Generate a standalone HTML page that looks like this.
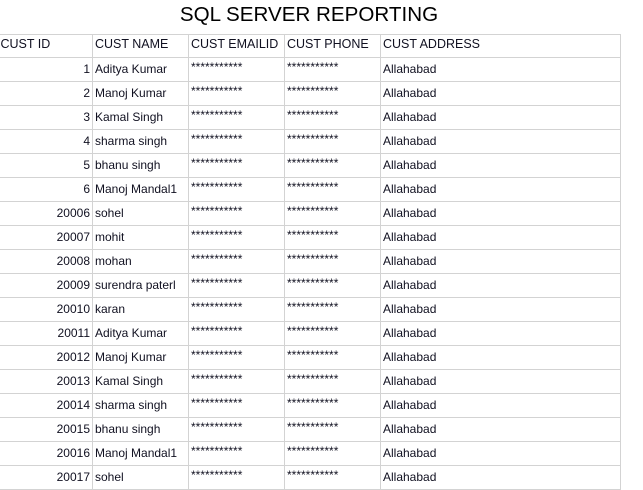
<!DOCTYPE html><html><head><style>
body{margin:0;width:643px;height:490px;overflow:hidden;background:#fff;font-family:"Liberation Sans",Arial,sans-serif;color:#000}
.t{position:absolute;left:0;width:618px;top:3px;text-align:center;font-size:20.6px}
table{position:absolute;left:-2px;top:34px;border-collapse:collapse;table-layout:fixed}
td{border:1px solid #d3d3d3;height:24px;padding:0 2px;font-size:12px;vertical-align:top;padding-top:4px;box-sizing:border-box;white-space:nowrap;overflow:hidden;color:#101020}
tr:first-child td{height:23px;padding-top:2px;font-size:12.5px}
td.n{text-align:right}
td.s{font-size:12px;padding-top:2px;line-height:14px}
</style></head><body>
<div class="t">SQL SERVER REPORTING</div>
<table>
<colgroup><col style="width:94px"><col style="width:96px"><col style="width:96px"><col style="width:96px"><col style="width:240px"></colgroup>
<tr><td style="border-left:none">CUST ID</td><td>CUST NAME</td><td>CUST EMAILID</td><td>CUST PHONE</td><td>CUST ADDRESS</td></tr>
<tr><td class="n">1</td><td>Aditya Kumar</td><td class="s">***********</td><td class="s">***********</td><td>Allahabad</td></tr>
<tr><td class="n">2</td><td>Manoj Kumar</td><td class="s">***********</td><td class="s">***********</td><td>Allahabad</td></tr>
<tr><td class="n">3</td><td>Kamal Singh</td><td class="s">***********</td><td class="s">***********</td><td>Allahabad</td></tr>
<tr><td class="n">4</td><td>sharma singh</td><td class="s">***********</td><td class="s">***********</td><td>Allahabad</td></tr>
<tr><td class="n">5</td><td>bhanu singh</td><td class="s">***********</td><td class="s">***********</td><td>Allahabad</td></tr>
<tr><td class="n">6</td><td>Manoj Mandal1</td><td class="s">***********</td><td class="s">***********</td><td>Allahabad</td></tr>
<tr><td class="n">20006</td><td>sohel</td><td class="s">***********</td><td class="s">***********</td><td>Allahabad</td></tr>
<tr><td class="n">20007</td><td>mohit</td><td class="s">***********</td><td class="s">***********</td><td>Allahabad</td></tr>
<tr><td class="n">20008</td><td>mohan</td><td class="s">***********</td><td class="s">***********</td><td>Allahabad</td></tr>
<tr><td class="n">20009</td><td>surendra paterl</td><td class="s">***********</td><td class="s">***********</td><td>Allahabad</td></tr>
<tr><td class="n">20010</td><td>karan</td><td class="s">***********</td><td class="s">***********</td><td>Allahabad</td></tr>
<tr><td class="n">20011</td><td>Aditya Kumar</td><td class="s">***********</td><td class="s">***********</td><td>Allahabad</td></tr>
<tr><td class="n">20012</td><td>Manoj Kumar</td><td class="s">***********</td><td class="s">***********</td><td>Allahabad</td></tr>
<tr><td class="n">20013</td><td>Kamal Singh</td><td class="s">***********</td><td class="s">***********</td><td>Allahabad</td></tr>
<tr><td class="n">20014</td><td>sharma singh</td><td class="s">***********</td><td class="s">***********</td><td>Allahabad</td></tr>
<tr><td class="n">20015</td><td>bhanu singh</td><td class="s">***********</td><td class="s">***********</td><td>Allahabad</td></tr>
<tr><td class="n">20016</td><td>Manoj Mandal1</td><td class="s">***********</td><td class="s">***********</td><td>Allahabad</td></tr>
<tr><td class="n">20017</td><td>sohel</td><td class="s">***********</td><td class="s">***********</td><td>Allahabad</td></tr>
</table>
</body></html>
